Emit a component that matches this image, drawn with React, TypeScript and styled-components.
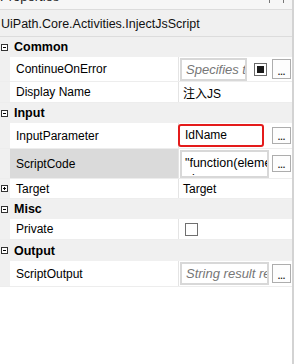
import styled, { createGlobalStyle } from "styled-components";

const GlobalStyle = createGlobalStyle`
  *, *::before, *::after {
    box-sizing: border-box;
  }
  html, body {
    margin: 0;
    padding: 0;
    background: #fff;
  }
  body {
    font-family: "Liberation Sans", "Noto Sans CJK SC", Arial, sans-serif;
    font-size: 12px;
    color: #000;
  }
`;

const Panel = styled.div`
  width: 294px;
  height: 364px;
  border-right: 2px solid #d3d3d3;
  background: #fff;
  display: flex;
  flex-direction: column;
  overflow: hidden;
`;

const TitleBar = styled.div`
  height: 10px;
  flex: none;
  overflow: hidden;
  background: #f6f6f6;
  border-bottom: 1px solid #dcdcdc;
  display: flex;
  justify-content: space-between;
`;

const TitleText = styled.div`
  font-size: 13px;
  line-height: 14px;
  margin-top: -10px;
  color: #222;
`;

const TitleIcons = styled.div`
  display: flex;
  gap: 13px;
  padding-right: 8px;
`;

const TitleTick = styled.span`
  width: 1px;
  height: 3px;
  background: #777;
`;

const TypeName = styled.div`
  height: 27px;
  flex: none;
  background: #f0f0f0;
  border-bottom: 1px solid #dcdcdc;
  display: flex;
  align-items: center;
  padding: 2px 0 0 1px;
  font-size: 12.5px;
  color: #111;
`;

const Grid = styled.div`
  display: flex;
  flex-direction: column;
`;

const CategoryRow = styled.div<{ $h?: number }>`
  display: flex;
  align-items: center;
  height: ${(p) => p.$h ?? 20}px;
  background: #f0f0f0;
  font-weight: bold;
  font-size: 12.5px;
`;

const Gutter = styled.div`
  width: 10px;
  flex: none;
  align-self: stretch;
  display: flex;
  align-items: center;
  padding-left: 1px;
  background: #f0f0f0;
`;

const CategoryLabel = styled.span`
  padding-left: 4px;
`;

const PropRow = styled.div<{ $h: number }>`
  display: flex;
  height: ${(p) => p.$h}px;
  border-bottom: 1px solid #ededed;
`;

const NameCell = styled.div<{ $selected?: boolean }>`
  width: 169px;
  flex: none;
  display: flex;
  align-items: center;
  padding-left: 6px;
  border-right: 1px solid #e4e4e4;
  background: ${(p) => (p.$selected ? "#dadada" : "#fff")};
`;

const ValueCell = styled.div`
  flex: 1;
  min-width: 0;
  display: flex;
  align-items: center;
  gap: 3px;
  padding: 0 1px;
`;

const ValueText = styled.span`
  padding-left: 3px;
`;

const TextBox = styled.div<{
  $w?: number;
  $h: number;
  $highlight?: boolean;
  $placeholder?: boolean;
}>`
  ${(p) => (p.$w ? `width: ${p.$w}px; flex: none;` : "flex: 1; min-width: 0;")}
  height: ${(p) => p.$h}px;
  border: 2px solid ${(p) => (p.$highlight ? "#e41b1b" : "#d8d8d8")};
  border-radius: ${(p) => (p.$highlight ? "3px" : "0")};
  margin-left: ${(p) => (p.$highlight ? "-2px" : "0")};
  padding: 0 ${(p) => (p.$highlight ? "5px" : "4px")};
  background: #fff;
  overflow: hidden;
  white-space: pre;
  line-height: ${(p) => p.$h - 4}px;
  font-size: ${(p) => (p.$placeholder ? "13px" : "12px")};
  font-style: ${(p) => (p.$placeholder ? "italic" : "normal")};
  color: ${(p) => (p.$placeholder ? "#767676" : "#000")};
`;

const CodeBox = styled.div`
  flex: 1;
  min-width: 0;
  height: 28px;
  border: 2px solid #d8d8d8;
  padding: 3px 3px 0;
  background: #fff;
  overflow: hidden;
  white-space: pre;
  font-size: 12.5px;
  line-height: 16px;
`;

const EllipsisButton = styled.button<{ $h: number }>`
  width: 19px;
  height: ${(p) => p.$h}px;
  flex: none;
  margin-left: auto;
  padding: 0 0 2px;
  border: 1px solid #adadad;
  background: #fdfdfd;
  display: flex;
  align-items: flex-end;
  justify-content: center;
  overflow: hidden;
  font-family: "Liberation Sans", Arial, sans-serif;
  font-size: 9px;
  font-weight: bold;
  line-height: 8px;
  color: #222;
`;

const ExprToggle = styled.span`
  width: 13px;
  height: 13px;
  margin: 0 2px 0 4px;
  flex: none;
  border: 1px solid #6a6a6a;
  padding: 2px;
  display: flex;
  &::after {
    content: "";
    flex: 1;
    background: #1a1a1a;
  }
`;

const CheckBox = styled.span`
  width: 13px;
  height: 13px;
  margin-left: 5px;
  border: 1px solid #707070;
  background: #fff;
`;

function Toggle({ open }: { open: boolean }) {
  return (
    <svg width="7" height="7" viewBox="0 0 7 7">
      <rect x="0.5" y="0.5" width="6" height="6" fill="#fff" stroke="#333" />
      <line x1="2" y1="3.5" x2="5" y2="3.5" stroke="#000" />
      {!open && <line x1="3.5" y1="2" x2="3.5" y2="5" stroke="#000" />}
    </svg>
  );
}

function Category({ label, h }: { label: string; h?: number }) {
  return (
    <CategoryRow $h={h}>
      <Gutter>
        <Toggle open />
      </Gutter>
      <CategoryLabel>{label}</CategoryLabel>
    </CategoryRow>
  );
}

export default function App() {
  return (
    <>
      <GlobalStyle />
      <Panel>
        <TitleBar>
          <TitleText>Properties</TitleText>
          <TitleIcons>
            <TitleTick />
            <TitleTick />
          </TitleIcons>
        </TitleBar>
        <TypeName>UiPath.Core.Activities.InjectJsScript</TypeName>
        <Grid>
          <Category label="Common" />
          <PropRow $h={25}>
            <Gutter />
            <NameCell>ContinueOnError</NameCell>
            <ValueCell>
              <TextBox $w={67} $h={23} $placeholder>
                Specifies that the automation should continue
              </TextBox>
              <ExprToggle />
              <EllipsisButton $h={20}>...</EllipsisButton>
            </ValueCell>
          </PropRow>
          <PropRow $h={21}>
            <Gutter />
            <NameCell>Display Name</NameCell>
            <ValueCell>
              <ValueText>注入JS</ValueText>
            </ValueCell>
          </PropRow>
          <Category label="Input" />
          <PropRow $h={26}>
            <Gutter />
            <NameCell>InputParameter</NameCell>
            <ValueCell>
              <TextBox $w={86} $h={23} $highlight>
                IdName
              </TextBox>
              <EllipsisButton $h={17}>...</EllipsisButton>
            </ValueCell>
          </PropRow>
          <PropRow $h={30}>
            <Gutter />
            <NameCell $selected>ScriptCode</NameCell>
            <ValueCell>
              <CodeBox>{'"function(element, input) {\n  i'}</CodeBox>
              <EllipsisButton $h={17}>...</EllipsisButton>
            </ValueCell>
          </PropRow>
          <PropRow $h={20}>
            <Gutter>
              <Toggle open={false} />
            </Gutter>
            <NameCell>Target</NameCell>
            <ValueCell>
              <ValueText>Target</ValueText>
            </ValueCell>
          </PropRow>
          <Category label="Misc" />
          <PropRow $h={21}>
            <Gutter />
            <NameCell>Private</NameCell>
            <ValueCell>
              <CheckBox />
            </ValueCell>
          </PropRow>
          <Category label="Output" h={21} />
          <PropRow $h={26}>
            <Gutter />
            <NameCell>ScriptOutput</NameCell>
            <ValueCell>
              <TextBox $h={23} $placeholder>
                String result returned by the script
              </TextBox>
              <EllipsisButton $h={19}>...</EllipsisButton>
            </ValueCell>
          </PropRow>
        </Grid>
      </Panel>
    </>
  );
}
